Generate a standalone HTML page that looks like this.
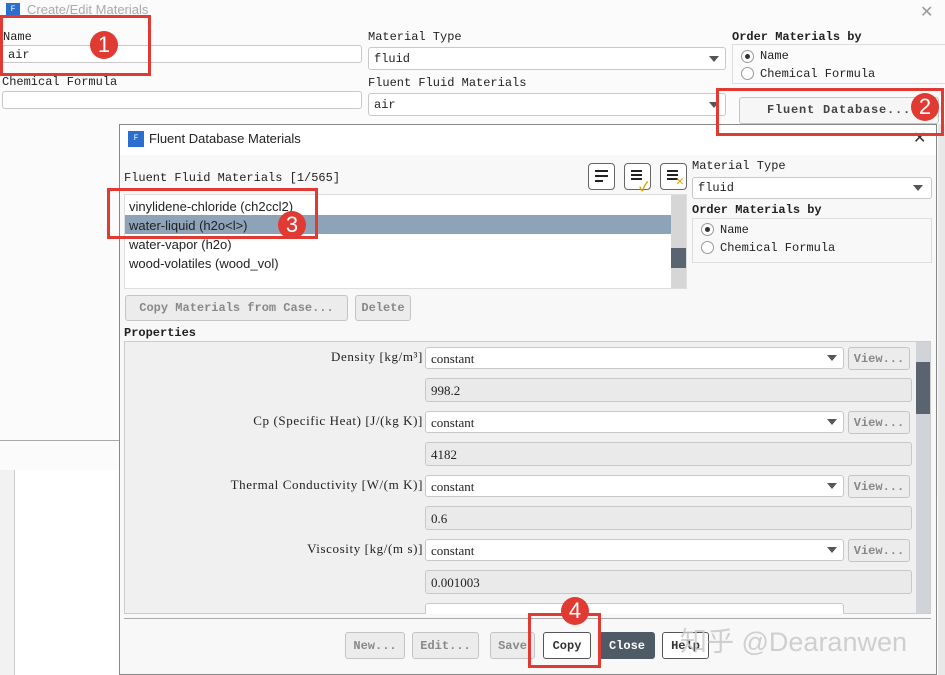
<!DOCTYPE html>
<html><head><meta charset="utf-8"><style>
*{box-sizing:border-box;margin:0;padding:0}
body{width:945px;height:675px;overflow:hidden;position:relative;background:#fff;font-family:"Liberation Mono","Noto Sans CJK SC",monospace;font-size:12px;color:#222}
.a{position:absolute}
.in{position:absolute;background:#fff;border:1px solid #c8c8c8;border-radius:3px;padding-left:5px;font-size:12px;line-height:18px}
.btn{position:absolute;background:#ececec;border:1px solid #c4c4c4;border-radius:3px;text-align:center;font-weight:bold;color:#888;font-size:12px}
.tri{position:absolute;width:0;height:0;border-left:5px solid transparent;border-right:5px solid transparent;border-top:6px solid #555}
.red{position:absolute;border:3px solid #e03a33}
.num{position:absolute;width:28px;height:28px;border-radius:50%;background:#e03a33;color:#fff;font-family:"Liberation Sans",sans-serif;font-size:22px;line-height:28px;text-align:center}
.rad{position:absolute;width:13px;height:13px;border-radius:50%;border:1px solid #999;background:#fff}
.rad.on::after{content:"";position:absolute;left:3px;top:3px;width:5px;height:5px;border-radius:50%;background:#333}
.sans{font-family:"Liberation Sans","Noto Sans CJK SC",sans-serif}
.lbl{position:absolute;right:522px;text-align:right;font-size:13px;letter-spacing:0.6px;font-family:"Liberation Serif",serif}
</style></head><body>
<div class="a" style="left:0;top:0;width:945px;height:495px;background:#fbfbfb"></div>
<div class="a" style="left:6px;top:3px;width:14px;height:14px;background:#2a6fd0;color:#fff;font-size:8px;text-align:center;line-height:14px">F</div>
<div class="a sans" style="left:27px;top:2px;color:#aaa;font-size:13px">Create/Edit Materials</div>
<div class="a sans" style="left:920px;top:2px;color:#999;font-size:16px">✕</div>
<div class="a" style="left:3px;top:30px">Name</div>
<div class="in" style="left:2px;top:45px;width:360px;height:18px">air</div>
<div class="a" style="left:2px;top:75px">Chemical Formula</div>
<div class="in" style="left:2px;top:91px;width:360px;height:18px"></div>
<div class="a" style="left:368px;top:30px">Material Type</div>
<div class="in" style="left:368px;top:47px;width:358px;height:23px;line-height:22px">fluid</div>
<div class="tri" style="left:709px;top:56px"></div>
<div class="a" style="left:368px;top:76px">Fluent Fluid Materials</div>
<div class="in" style="left:368px;top:93px;width:358px;height:23px;line-height:22px">air</div>
<div class="tri" style="left:709px;top:102px"></div>
<div class="a" style="left:732px;top:30px;font-weight:bold">Order Materials by</div>
<div class="a" style="left:732px;top:44px;width:213px;height:40px;border:1px solid #ddd;border-right:0"></div>
<div class="rad on" style="left:741px;top:50px"></div><div class="a" style="left:760px;top:49px">Name</div>
<div class="rad" style="left:741px;top:67px"></div><div class="a" style="left:760px;top:67px">Chemical Formula</div>
<div class="btn" style="left:739px;top:97px;width:200px;height:27px;line-height:25px;color:#444;background:#f6f6f6;letter-spacing:0.8px">Fluent Database...</div>
<div class="a" style="left:0;top:440px;width:120px;height:1px;background:#aaa"></div>
<div class="a" style="left:0;top:470px;width:120px;height:205px;background:#f2f2f2"></div>
<div class="a" style="left:14px;top:470px;width:106px;height:205px;background:#fff;border-left:1px solid #ccc"></div>
<div class="a" style="left:938px;top:124px;width:7px;height:551px;background:#e8e8e8"></div>

<div class="a" style="left:119px;top:124px;width:818px;height:551px;background:#f8f8f8;border:1px solid #888"></div>
<div class="a" style="left:120px;top:125px;width:816px;height:30px;background:#fff"></div>
<div class="a" style="left:128px;top:131px;width:16px;height:16px;background:#2a6fd0;color:#fff;font-size:8px;text-align:center;line-height:16px">F</div>
<div class="a sans" style="left:149px;top:131px;font-size:13px;color:#222">Fluent Database Materials</div>
<div class="a sans" style="left:913px;top:128px;font-size:16px;color:#333">✕</div>
<div class="a" style="left:124px;top:171px">Fluent Fluid Materials [1/565]</div>
<div class="a" style="left:588px;top:163px;width:27px;height:27px;border:1px solid #666;border-radius:4px;background:#fff"><div class="a" style="left:6px;top:6px;width:13px;height:2px;background:#222;box-shadow:0 5px 0 #222"></div><div class="a" style="left:6px;top:16px;width:8px;height:2px;background:#222"></div></div>
<div class="a" style="left:624px;top:163px;width:27px;height:27px;border:1px solid #666;border-radius:4px;background:#fff"><div class="a" style="left:6px;top:6px;width:11px;height:2px;background:#222;box-shadow:0 4px 0 #222,0 8px 0 #222"></div><div class="a" style="left:14px;top:12px;color:#d8a800;font-size:13px;font-weight:bold">✓</div></div>
<div class="a" style="left:660px;top:163px;width:27px;height:27px;border:1px solid #666;border-radius:4px;background:#fff"><div class="a" style="left:6px;top:6px;width:11px;height:2px;background:#222;box-shadow:0 4px 0 #222,0 8px 0 #222"></div><div class="a" style="left:15px;top:10px;color:#d8a800;font-size:13px;font-weight:bold">✕</div></div>
<div class="a" style="left:124px;top:194px;width:563px;height:95px;background:#fff;border:1px solid #ddd"></div>
<div class="a" style="left:125px;top:215px;width:546px;height:19px;background:#8ea3b8"></div>
<div class="a sans" style="left:129px;top:197px;font-size:13px;line-height:19px">vinylidene-chloride (ch2ccl2)<br>water-liquid (h2o&lt;l&gt;)<br>water-vapor (h2o)<br>wood-volatiles (wood_vol)</div>
<div class="a" style="left:671px;top:195px;width:15px;height:93px;background:#d6d6d6"></div>
<div class="a" style="left:671px;top:248px;width:15px;height:20px;background:#5a6370"></div>
<div class="btn" style="left:125px;top:295px;width:223px;height:26px;line-height:25px">Copy Materials from Case...</div>
<div class="btn" style="left:355px;top:295px;width:56px;height:26px;line-height:25px">Delete</div>
<div class="a" style="left:124px;top:326px;font-weight:bold">Properties</div>
<div class="a" style="left:692px;top:159px">Material Type</div>
<div class="in" style="left:692px;top:177px;width:240px;height:22px;line-height:20px">fluid</div>
<div class="tri" style="left:913px;top:185px"></div>
<div class="a" style="left:692px;top:203px;font-weight:bold">Order Materials by</div>
<div class="a" style="left:692px;top:218px;width:240px;height:45px;border:1px solid #ddd"></div>
<div class="rad on" style="left:701px;top:223px"></div><div class="a" style="left:720px;top:223px">Name</div>
<div class="rad" style="left:701px;top:241px"></div><div class="a" style="left:720px;top:241px">Chemical Formula</div>

<div class="a" style="left:124px;top:341px;width:807px;height:273px;background:#f0f0f0;border:1px solid #ccc;overflow:hidden">
 <div class="a" style="left:791px;top:0;width:15px;height:273px;background:#d0d4d8"></div>
 <div class="a" style="left:791px;top:20px;width:15px;height:52px;background:#5a6370"></div>
</div>
<div class="lbl" style="top:349px">Density [kg/m³]</div>
<div class="lbl" style="top:413px">Cp (Specific Heat) [J/(kg K)]</div>
<div class="lbl" style="top:477px">Thermal Conductivity [W/(m K)]</div>
<div class="lbl" style="top:541px">Viscosity [kg/(m s)]</div>
<div class="in" style="left:425px;top:347px;width:419px;height:22px;line-height:21px;font-family:'Liberation Serif',serif;font-size:13px">constant</div><div class="tri" style="left:827px;top:355px"></div>
<div class="btn" style="left:848px;top:347px;width:62px;height:23px;line-height:22px">View...</div>
<div class="in" style="left:425px;top:378px;width:487px;height:24px;line-height:23px;background:#eaeaea;font-family:'Liberation Serif',serif;font-size:13px">998.2</div>
<div class="in" style="left:425px;top:411px;width:419px;height:22px;line-height:21px;font-family:'Liberation Serif',serif;font-size:13px">constant</div><div class="tri" style="left:827px;top:419px"></div>
<div class="btn" style="left:848px;top:411px;width:62px;height:23px;line-height:22px">View...</div>
<div class="in" style="left:425px;top:442px;width:487px;height:24px;line-height:23px;background:#eaeaea;font-family:'Liberation Serif',serif;font-size:13px">4182</div>
<div class="in" style="left:425px;top:475px;width:419px;height:22px;line-height:21px;font-family:'Liberation Serif',serif;font-size:13px">constant</div><div class="tri" style="left:827px;top:483px"></div>
<div class="btn" style="left:848px;top:475px;width:62px;height:23px;line-height:22px">View...</div>
<div class="in" style="left:425px;top:506px;width:487px;height:24px;line-height:23px;background:#eaeaea;font-family:'Liberation Serif',serif;font-size:13px">0.6</div>
<div class="in" style="left:425px;top:539px;width:419px;height:22px;line-height:21px;font-family:'Liberation Serif',serif;font-size:13px">constant</div><div class="tri" style="left:827px;top:547px"></div>
<div class="btn" style="left:848px;top:539px;width:62px;height:23px;line-height:22px">View...</div>
<div class="in" style="left:425px;top:570px;width:487px;height:24px;line-height:23px;background:#eaeaea;font-family:'Liberation Serif',serif;font-size:13px">0.001003</div>
<div class="in" style="left:425px;top:603px;width:419px;height:11px;border-bottom:0;border-radius:3px 3px 0 0"></div>
<div class="a" style="left:124px;top:618px;width:807px;height:1px;background:#aaa"></div>

<div class="btn" style="left:345px;top:632px;width:60px;height:27px;line-height:26px">New...</div>
<div class="btn" style="left:412px;top:632px;width:67px;height:27px;line-height:26px">Edit...</div>
<div class="btn" style="left:490px;top:632px;width:45px;height:27px;line-height:26px">Save</div>
<div class="btn" style="left:543px;top:632px;width:48px;height:27px;line-height:26px;background:#fff;color:#333;border-color:#555">Copy</div>
<div class="btn" style="left:599px;top:632px;width:56px;height:27px;line-height:26px;background:#4e5a66;color:#fff;border-color:#4e5a66">Close</div>
<div class="btn" style="left:662px;top:632px;width:47px;height:27px;line-height:26px;background:#fff;color:#333;border-color:#555">Help</div>
<div class="a sans" style="left:680px;top:620px;font-size:27px;color:rgba(200,200,200,0.85)">知乎 @Dearanwen</div>

<div class="red" style="left:0;top:15px;width:151px;height:61px"></div>
<div class="num" style="left:90px;top:31px">1</div>
<div class="red" style="left:716px;top:88px;width:228px;height:48px"></div>
<div class="num" style="left:911px;top:93px">2</div>
<div class="red" style="left:107px;top:188px;width:211px;height:51px"></div>
<div class="num" style="left:278px;top:211px">3</div>
<div class="red" style="left:528px;top:613px;width:73px;height:55px"></div>
<div class="num" style="left:561px;top:597px">4</div>
</body></html>
